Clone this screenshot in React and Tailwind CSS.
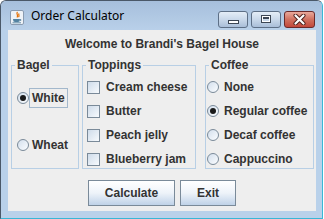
import React from "react";

const SANS = "[font-family:'Liberation_Sans',Arial,sans-serif]";

function Radio({ checked }) {
  return (
    <span className="relative flex h-[12px] w-[12px] shrink-0 items-center justify-center rounded-full border border-[#7a8a99] bg-gradient-to-br from-[#d3dfec] to-[#fbfdff]">
      {checked && <span className="h-[6px] w-[6px] rounded-full bg-[#1a1a1a]" />}
    </span>
  );
}

function Check() {
  return (
    <span className="h-[13px] w-[13px] shrink-0 border border-[#7a8a99] bg-gradient-to-br from-[#cfdcea] to-[#f7fafd]" />
  );
}

function Group({ title, className, children }) {
  return (
    <div className={"relative h-[104px] border border-[#b8cfe5] " + className}>
      <span className="absolute -top-[8px] left-[3px] bg-[#eeeeee] px-[2px] text-[12px] leading-[14px] font-bold text-[#333333]">
        {title}
      </span>
      {children}
    </div>
  );
}

function CaptionButton({ close, children, w }) {
  return (
    <div
      className={
        "flex h-[17px] items-center justify-center rounded-[3px] border " +
        (close
          ? "border-[#6b2a2a] bg-gradient-to-b from-[#e9a99c] via-[#d0705f] to-[#c2473a] "
          : "border-[#5d6f86] bg-gradient-to-b from-[#e4edf7] via-[#c9d8ea] to-[#a9bed8] ") +
        w
      }
    >
      {children}
    </div>
  );
}

export default function App() {
  return (
    <div className={"h-[219px] w-[324px] overflow-hidden bg-white " + SANS}>
      <div className="flex h-[219px] w-[323px] flex-col rounded-t-[6px] border-t border-l border-[#4a5868] border-r-[#39b7d6] border-b-[#39b7d6] border-r border-b bg-[#b9d1ea]">
        {/* Title bar */}
        <div className="flex h-[29px] items-center rounded-t-[5px] bg-gradient-to-b from-[#a6bfdc] to-[#b9d0e9] pl-[9px] pr-[7px]">
          <svg width="14" height="15" viewBox="0 0 14 15" className="mt-[3px]">
            <rect x="0.5" y="0.5" width="13" height="14" rx="1.5" fill="#eef2f7" stroke="#8a9bb0" />
            <path d="M7.5 2 C5.5 4 9 5 7 7.5 M9 3.5 C8 5 10 5.5 8.5 7" stroke="#e76f00" strokeWidth="1.2" fill="none" />
            <path d="M3 9 L10 9 L9.5 11.5 Q6.5 12.5 3.5 11.5 Z" fill="#5382a1" />
            <path d="M10 9.3 Q12 9.6 10.3 11" stroke="#5382a1" strokeWidth="0.9" fill="none" />
            <path d="M2.5 12.8 L11 12.8" stroke="#5382a1" strokeWidth="0.9" />
          </svg>
          <span className="ml-[7px] mt-[1px] text-[12px] leading-[14px] text-black [font-family:'Noto_Sans',sans-serif]">
            Order Calculator
          </span>
          <div className="ml-auto mt-[7px] flex gap-[3px]">
            <CaptionButton w="w-[30px]">
              <span className="mt-[5px] h-[4px] w-[11px] border border-[#3c4654] bg-white" />
            </CaptionButton>
            <CaptionButton w="w-[30px]">
              <span className="h-[8px] w-[10px] border border-[#3c4654] bg-white p-[1px]">
                <span className="block h-full w-full border-t-2 border-[#3c4654] bg-[#c9d8ea]" />
              </span>
            </CaptionButton>
            <CaptionButton close w="w-[31px]">
              <svg width="13" height="11" viewBox="0 0 13 11">
                <path d="M2.5 1.5 L10.5 9.5 M10.5 1.5 L2.5 9.5" stroke="#4a1e1a" strokeWidth="4" strokeLinecap="round" />
                <path d="M2.5 1.5 L10.5 9.5 M10.5 1.5 L2.5 9.5" stroke="#ffffff" strokeWidth="2.2" strokeLinecap="round" />
              </svg>
            </CaptionButton>
          </div>
        </div>

        {/* Content */}
        <div className="ml-[7px] flex h-[181px] w-[308px] flex-col bg-[#eeeeee] text-[12px] font-bold text-[#333333]">
          <div className="h-[28px] text-center leading-[28px]">Welcome to Brandi's Bagel House</div>

          <div className="ml-[3px] mt-[7px] flex">
            <Group title="Bagel" className="w-[68px]">
              <div className="flex flex-col gap-[27px] pl-[5px] pt-[22px]">
                <div className="flex h-[20px] items-center">
                  <Radio checked />
                  <span className="ml-[0px] flex h-[20px] items-center border border-[#a3b8cc] px-[2px] leading-[14px]">
                    White
                  </span>
                </div>
                <div className="flex h-[20px] items-center">
                  <Radio />
                  <span className="flex h-[20px] items-center border border-transparent px-[2px] leading-[14px]">
                    Wheat
                  </span>
                </div>
              </div>
            </Group>

            <Group title="Toppings" className="ml-[3px] w-[114px]">
              <div className="flex flex-col pl-[4px] pt-[9px]">
                {["Cream cheese", "Butter", "Peach jelly", "Blueberry jam"].map((t) => (
                  <div key={t} className="flex h-[24px] items-center gap-[6px]">
                    <Check />
                    <span className="leading-[14px]">{t}</span>
                  </div>
                ))}
              </div>
            </Group>

            <Group title="Coffee" className="ml-[9px] w-[109px]">
              <div className="flex flex-col pl-[1px] pt-[9px]">
                {["None", "Regular coffee", "Decaf coffee", "Cappuccino"].map((t) => (
                  <div key={t} className="flex h-[24px] items-center gap-[5px]">
                    <Radio checked={t === "Regular coffee"} />
                    <span className="leading-[14px]">{t}</span>
                  </div>
                ))}
              </div>
            </Group>
          </div>

          <div className="mt-[11px] flex justify-center gap-[5px]">
            <button className="h-[26px] w-[87px] border border-[#7a8a99] bg-gradient-to-b from-[#ffffff] via-[#eef3f9] to-[#bfd2e8] text-[12px] font-bold text-[#333333]">
              Calculate
            </button>
            <button className="h-[26px] w-[56px] border border-[#7a8a99] bg-gradient-to-b from-[#ffffff] via-[#eef3f9] to-[#bfd2e8] text-[12px] font-bold text-[#333333]">
              Exit
            </button>
          </div>
        </div>
      </div>
    </div>
  );
}
